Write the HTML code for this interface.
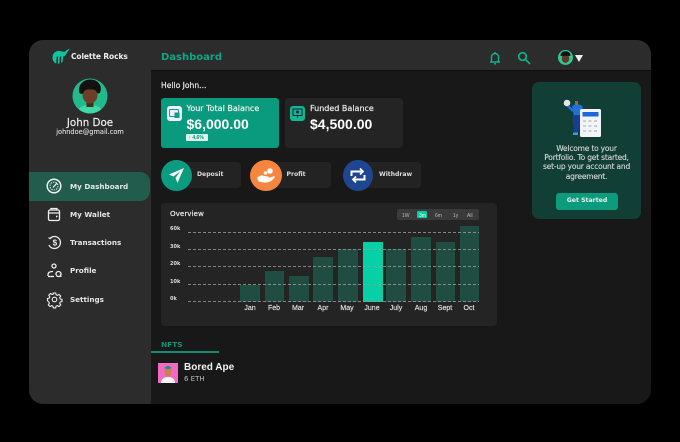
<!DOCTYPE html>
<html><head><meta charset="utf-8"><style>
html,body{margin:0;padding:0;background:#000;}
body{width:680px;height:442px;overflow:hidden;position:relative;font-family:"DejaVu Sans","Liberation Sans",sans-serif;color:#f0f0f0;}
#app{position:absolute;left:29px;top:40px;width:622px;height:364px;border-radius:14px;overflow:hidden;background:#181818;}
.a{position:absolute;white-space:nowrap;}
.abs{position:absolute;}
svg{position:absolute;overflow:visible;}
.nav{font-size:7.2px;font-weight:700;color:#e6e6e6;left:70px;}
.lbl{font-size:6.1px;font-weight:700;color:#ddd;}
.bar{position:absolute;background:#1f4d42;}
.grid{position:absolute;left:188px;width:291px;height:1px;opacity:.8;background:repeating-linear-gradient(90deg,#9a9a9a 0 3px,transparent 3px 5px);}
.yl{position:absolute;left:170px;font-size:5px;font-weight:700;color:#ddd;}
.m{position:absolute;top:305px;font:400 7px "Liberation Sans",sans-serif;color:#e2e2e2;text-align:center;width:30px;-webkit-text-stroke:.15px #e2e2e2;}
.tab{position:absolute;top:212.5px;font:400 5px "Liberation Sans",sans-serif;color:#bbb;}
</style></head><body>
<div id="app"></div>
<div class="abs" style="left:29px;top:40px;width:122px;height:364px;background:#2c2c2c;border-radius:14px 0 0 14px"></div>
<div class="abs" style="left:151px;top:40px;width:500px;height:30px;background:#2c2c2c;border-radius:0 14px 0 0"></div>
<div class="abs" style="left:151px;top:70px;width:500px;height:1px;background:#0e0e0e"></div>

<!-- logo -->
<svg style="left:51px;top:48px" width="20" height="18" viewBox="0 0 20 18"><path d="M1.500 9.500C1.500 5 5 2.500 9 3c3 .4 4.500 2 6-.5L19 .5l-3.500 5c-1 2-2.200 3-3.300 3L11.500 14l-1.500.8.300-6.300-1.500 0-.4 7-1.600.4.300-7.400-1.400 0-.5 7C3 14.500 1.500 12.500 1.500 9.500z" fill="#10c49e"/></svg>
<div class="a" style="left:71px;top:52px;font-size:7.5px;font-weight:700;color:#eee;letter-spacing:-.1px">Colette Rocks</div>

<!-- avatar -->
<svg style="left:72px;top:78px" width="36" height="36" viewBox="0 0 36 36"><defs><clipPath id="c1"><circle cx="18" cy="18" r="17.500"/></clipPath></defs><circle cx="18" cy="18" r="17.500" fill="#22b98c"/><g clip-path="url(#c1)"><path d="M5 36c1-7 6-9 13-9s12 2 13 9z" fill="#3ed9a6"/><rect x="14.500" y="22" width="7" height="7" fill="#4a2a18"/><ellipse cx="18" cy="17" rx="7.500" ry="8.500" fill="#6b3f25"/><path d="M7.500 15C5 8 11 1.500 18 1.500c8 0 13 6 10 13.500-1 .5-2 .5-3 0C24 12 22 11 18 11.500c-4-.5-6 1-7 4-1 .5-2.500 .5-3.500-.5z" fill="#111"/></g></svg>
<div class="a" style="left:29px;width:122px;text-align:center;top:116.500px;font-size:10.300px;font-weight:400;color:#f2f2f2;-webkit-text-stroke:.15px #f2f2f2">John Doe</div>
<div class="a" style="left:29px;width:122px;text-align:center;top:128px;font-size:6.600px;color:#ddd;-webkit-text-stroke:.12px #ddd">johndoe@gmail.com</div>

<!-- nav -->
<div class="abs" style="left:29px;top:172px;width:121px;height:29px;background:#215c4d;border-radius:0 10px 10px 0"></div>
<svg style="left:46px;top:178px" width="16" height="16" viewBox="0 0 16 16" fill="none" stroke="#eee"><circle cx="8" cy="8" r="6.800" stroke-width="1.500"/><circle cx="8" cy="8" r="4" stroke-width="1" stroke-dasharray="1.500 1"/><path d="M7 9.500 11 5" stroke-width="1.300"/></svg>
<div class="a nav" style="top:182px">My Dashboard</div>
<svg style="left:47px;top:207px" width="14" height="15" viewBox="0 0 14 15" fill="none" stroke="#eee" stroke-width="1.300"><rect x="1.500" y="3" width="11" height="10.500" rx="1.500"/><path d="M4 3V1.500h6V3M1.500 6h11"/><path d="M9 9.500h1.500" stroke-width="1.600"/></svg>
<div class="a nav" style="top:210px">My Wallet</div>
<svg style="left:47px;top:235px" width="15" height="15" viewBox="0 0 15 15" fill="none" stroke="#eee" stroke-width="1.300"><path d="M3 3.500A6 6 0 1 1 2 10"/><path d="M1.500 2.500 3 3.800l1.500-1" stroke-width="1"/><text x="7.800" y="10.500" font-size="8" font-weight="700" fill="#eee" stroke="none" text-anchor="middle" font-family="Liberation Sans">$</text></svg>
<div class="a nav" style="top:238px">Transactions</div>
<svg style="left:47px;top:263px" width="15" height="15" viewBox="0 0 15 15" fill="none" stroke="#eee" stroke-width="1.300"><circle cx="7" cy="3" r="2"/><path d="M1 13v-1.500c0-2 2-3 5-3"/><path d="M1 13.500h6"/><circle cx="11.500" cy="11" r="2.500"/><path d="M13.800 11v3" /></svg>
<div class="a nav" style="top:266px">Profile</div>
<svg style="left:47px;top:292px" width="15" height="15" viewBox="0 0 15 15" fill="none" stroke="#eee" stroke-width="1.100"><circle cx="7.500" cy="7.500" r="2.300"/><path d="M6.300 1h2.400l.4 1.800 1.300.6 1.600-1 1.700 1.700-1 1.600.5 1.300 1.800.4v2.200l-1.800.4-.5 1.300 1 1.600-1.700 1.700-1.600-1-1.300.5-.4 1.800H6.300l-.4-1.800-1.300-.5-1.600 1-1.700-1.700 1-1.600-.5-1.300L.500 8.700V6.500l1.800-.4.500-1.300-1-1.600 1.700-1.700 1.600 1 1.300-.6z"/></svg>
<div class="a nav" style="top:295px">Settings</div>

<!-- top bar -->
<div class="a" style="left:161px;top:52px;font-size:10px;font-weight:700;color:#12a585">Dashboard</div>
<svg style="left:489px;top:51px" width="12" height="14" viewBox="0 0 12 14" fill="none" stroke="#12b08e" stroke-width="1.400"><path d="M1 11h10M2.500 11V6a3.500 3.500 0 0 1 7 0v5M5 12.800h2M6 1v1"/></svg>
<svg style="left:517px;top:51px" width="14" height="14" viewBox="0 0 14 14" fill="none" stroke="#12b08e" stroke-width="1.700"><circle cx="5.500" cy="5.500" r="3.800"/><path d="M8.500 8.500 13 13"/></svg>
<svg style="left:558px;top:50px" width="15" height="15" viewBox="0 0 36 36"><defs><clipPath id="c2"><circle cx="18" cy="18" r="18"/></clipPath></defs><circle cx="18" cy="18" r="18" fill="#2fc795"/><g clip-path="url(#c2)"><ellipse cx="18" cy="20" rx="9" ry="11" fill="#5f3823"/><path d="M6 14C6 6 12 3 18 3s12 3 12 11H6z" fill="#111"/></g></svg>
<svg style="left:575px;top:55px" width="8" height="7" viewBox="0 0 8 7"><path d="M0 0h8L4 7z" fill="#eee"/></svg>

<!-- hello -->
<div class="a" style="left:161px;top:81px;font-size:7.600px;color:#eee;-webkit-text-stroke:.15px #eee">Hello John...</div>

<!-- balance -->
<div class="abs" style="left:161px;top:98px;width:118px;height:50px;background:#0a9a7d;border-radius:3px"></div>
<div class="abs" style="left:167px;top:106px;width:15px;height:15px;background:#eef;border-radius:3px"></div>
<svg style="left:169px;top:108px" width="11" height="11" viewBox="0 0 11 11" fill="none" stroke="#129c80" stroke-width="1"><rect x=".5" y="1.500" width="9" height="7" rx="1"/><path d="M6 5h4v4.500H6z" fill="#129c80"/></svg>
<div class="a" style="left:186.500px;top:104px;font-size:8px;color:#f0f0f0;-webkit-text-stroke:.2px #f0f0f0">Your Total Balance</div>
<div class="a" style="left:186.500px;top:115.500px;font:700 14px 'Liberation Sans',sans-serif;color:#fff">$6,000.00</div>
<div class="abs" style="left:186px;top:134px;width:22px;height:7px;background:#dff3ee;border-radius:1px"></div>
<div class="a" style="left:188.500px;top:134.500px;font:600 5px 'Liberation Sans',sans-serif;color:#0a9a7d">↑ 4.6%</div>

<div class="abs" style="left:285px;top:98px;width:118px;height:50px;background:#242424;border-radius:4px"></div>
<div class="abs" style="left:290px;top:106px;width:15px;height:15px;background:#12b695;border-radius:3px"></div>
<svg style="left:292px;top:108px" width="11" height="11" viewBox="0 0 11 11" fill="none" stroke="#123" stroke-width="1"><rect x="1" y="1" width="9" height="6.500"/><circle cx="5.500" cy="4" r="1" fill="#123"/><path d="M5.500 7.500V10"/></svg>
<div class="a" style="left:310px;top:104px;font-size:8px;color:#e8e8e8;-webkit-text-stroke:.2px #e8e8e8">Funded Balance</div>
<div class="a" style="left:310px;top:115.500px;font:700 14px 'Liberation Sans',sans-serif;color:#fff">$4,500.00</div>

<!-- actions -->
<div class="abs" style="left:175px;top:162px;width:66px;height:26px;background:#232323;border-radius:4px"></div>
<div class="abs" style="left:161px;top:160px;width:31px;height:31px;border-radius:50%;background:#0b9b7f"></div>
<svg style="left:168px;top:167px" width="17" height="17" viewBox="0 0 17 17"><path d="M16 1 1 7.500l4.500 2L12 4.500 7.500 11l2 5z" fill="#f4f4f4"/></svg>
<div class="a lbl" style="left:197px;top:170.500px">Deposit</div>

<div class="abs" style="left:265px;top:162px;width:66px;height:26px;background:#232323;border-radius:4px"></div>
<div class="abs" style="left:250px;top:160px;width:32px;height:31px;border-radius:50%;background:#f5853f"></div>
<svg style="left:256px;top:167px" width="20" height="17" viewBox="0 0 20 17"><path d="M1 11c3-3 5-3 7-2l4 .5c1 .5 1 1.500 0 2l-3 .2 6-1.500 3-1c1 0 1 1 .5 1.500C16 14 12 16 8 15.500c-2-.3-4-1-5-.5z" fill="#fff"/><circle cx="14" cy="4" r="2.800" fill="#fff"/><circle cx="9.500" cy="6" r="1.800" fill="#fff"/></svg>
<div class="a lbl" style="left:286.500px;top:170.500px">Profit</div>

<div class="abs" style="left:355px;top:162px;width:66px;height:26px;background:#232323;border-radius:4px"></div>
<div class="abs" style="left:343px;top:160px;width:30px;height:31px;border-radius:50%;background:#1f4690"></div>
<svg style="left:349px;top:168px" width="18" height="15" viewBox="0 0 18 15" fill="none" stroke="#fff" stroke-width="2"><path d="M2.500 8V3.500h11M15.500 7v4.500h-11"/><path d="M11 .5l3 3-3 3M7 8.500l-3 3 3 3" stroke-width="1.700"/></svg>
<div class="a lbl" style="left:379px;top:170.500px">Withdraw</div>

<!-- chart -->
<div class="abs" style="left:161px;top:203px;width:336px;height:123px;background:#242424;border-radius:4px"></div>
<div class="a" style="left:170px;top:209px;font-size:7.200px;color:#eee;-webkit-text-stroke:.15px #eee">Overview</div>
<div class="abs" style="left:397px;top:209px;width:82px;height:11px;background:#3a3a3a;border-radius:2px"></div>
<div class="abs" style="left:417px;top:211px;width:10px;height:7px;background:#10c9a1;border-radius:1px"></div>
<div class="tab" style="left:402px">1W</div><div class="tab" style="left:419px;color:#dff">3m</div><div class="tab" style="left:435px">6m</div><div class="tab" style="left:453px">1y</div><div class="tab" style="left:467px">All</div>

<div class="bar" style="left:240px;top:285px;width:20px;height:17px"></div>
<div class="bar" style="left:265px;top:271px;width:19px;height:31px"></div>
<div class="bar" style="left:289px;top:276px;width:20px;height:26px"></div>
<div class="bar" style="left:313px;top:257px;width:20px;height:45px"></div>
<div class="bar" style="left:338px;top:249px;width:20px;height:53px"></div>
<div class="bar" style="left:363px;top:242px;width:20px;height:60px;background:#05d0a6"></div>
<div class="bar" style="left:386px;top:249px;width:20px;height:53px"></div>
<div class="bar" style="left:411px;top:237px;width:20px;height:65px"></div>
<div class="bar" style="left:436px;top:242px;width:19px;height:60px"></div>
<div class="bar" style="left:460px;top:226px;width:19px;height:76px"></div>
<div class="grid" style="top:232px"></div><div class="grid" style="top:249px"></div><div class="grid" style="top:266px"></div><div class="grid" style="top:284px"></div><div class="grid" style="top:301px"></div>
<div class="yl" style="top:226px">60k</div><div class="yl" style="top:244px">30k</div><div class="yl" style="top:261px">20k</div><div class="yl" style="top:279px">10k</div><div class="yl" style="top:296px">0k</div>
<div class="m" style="left:235px">Jan</div><div class="m" style="left:259px">Feb</div><div class="m" style="left:283px">Mar</div><div class="m" style="left:308px">Apr</div><div class="m" style="left:332px">May</div><div class="m" style="left:357px">June</div><div class="m" style="left:381px">July</div><div class="m" style="left:406px">Aug</div><div class="m" style="left:430px">Sept</div><div class="m" style="left:454px">Oct</div>

<!-- nfts -->
<div class="a" style="left:161px;top:340px;font-size:7.400px;font-weight:700;color:#0f9477">NFTS</div>
<div class="abs" style="left:151px;top:351px;width:68px;height:2px;background:#0f8e73"></div>
<svg style="left:158px;top:363px" width="20" height="20" viewBox="0 0 20 20"><rect width="20" height="20" fill="#f06bc0"/><path d="M3 20c0-4 3-6 7-6s7 2 7 6z" fill="#f4f4f4"/><ellipse cx="10" cy="9" rx="3.500" ry="4.500" fill="#c9824f"/><path d="M6 5l3-2 2 0 3 2-3 1H9z" fill="#1f8d8a"/></svg>
<div class="a" style="left:184px;top:362px;font:700 10px 'Liberation Sans',sans-serif;color:#f2f2f2">Bored Ape</div>
<div class="a" style="left:184px;top:375px;font-size:7px;color:#bbb">6 ETH</div>

<!-- right card -->
<div class="abs" style="left:532px;top:82px;width:109px;height:137px;background:#123f35;border-radius:7px"></div>
<svg style="left:560px;top:97px" width="46" height="42" viewBox="0 0 46 42"><circle cx="7" cy="6" r="3.300" fill="#e6e6e6"/><path d="M8 9l5 5" stroke="#1e72d8" stroke-width="2.400"/><path d="M12 9c4-3 9-2 11 1l-3 8-6 2z" fill="#1e72d8"/><path d="M13 18h7c2 6 0 12-2 18h-4c0-7-2-11-1-18z" fill="#173f8f"/><rect x="13" y="35.500" width="5" height="2.500" fill="#3e9ce0"/><path d="M15 4h3v4h-3z" fill="#a4623c"/><rect x="20" y="12" width="21" height="28" rx="1.500" fill="#f2f4f6"/><rect x="22.500" y="15" width="16" height="4.500" fill="#1d66df"/><g fill="#c4d0d8"><rect x="23" y="23" width="3" height="2"/><rect x="28.500" y="23" width="3" height="2"/><rect x="34" y="23" width="3" height="2"/><rect x="23" y="28" width="3" height="2"/><rect x="28.500" y="28" width="3" height="2"/><rect x="34" y="28" width="3" height="2"/><rect x="23" y="33" width="3" height="2"/><rect x="28.500" y="33" width="3" height="2"/><rect x="34" y="33" width="3" height="2"/></g></svg>
<div class="abs" style="left:532px;width:109px;top:143.500px;text-align:center;font:400 7.500px/9.400px 'DejaVu Sans',sans-serif;color:#dcdcdc;letter-spacing:-.2px;-webkit-text-stroke:.1px #dcdcdc">Welcome to your<br>Portfolio. To get started,<br>set-up your account and<br>agreement.</div>
<div class="abs" style="left:556px;top:193px;width:62px;height:17px;background:#0d9b7d;border-radius:3px;text-align:center;font-size:6.200px;line-height:16px;font-weight:700;color:#e8f5f0">Get Started</div>
</body></html>
